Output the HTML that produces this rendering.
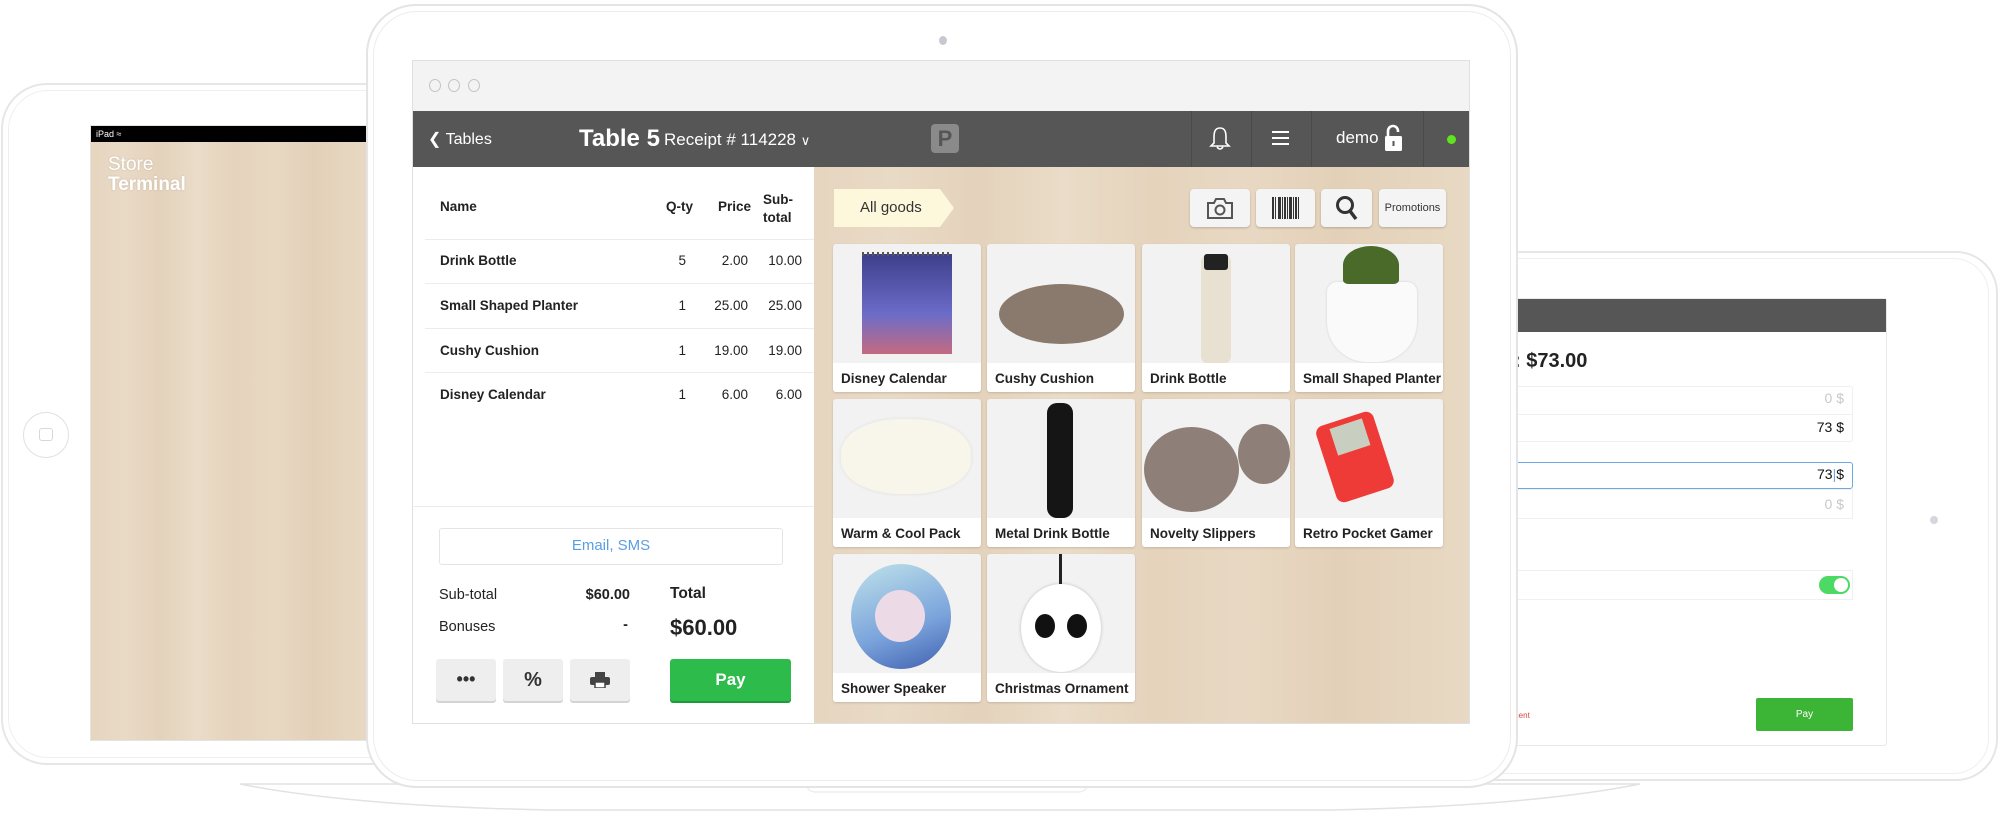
<!DOCTYPE html>
<html><head><meta charset="utf-8"><style>
*{box-sizing:border-box;margin:0;padding:0}
body{width:2000px;height:814px;background:#fff;position:relative;overflow:hidden;font-family:"Liberation Sans",sans-serif;color:#222}
.a{position:absolute}
.wood{background:linear-gradient(90deg,#e6d5bf 0%,#e9dac6 12%,#e4d2bb 25%,#eadcc8 38%,#e5d3bc 52%,#e8d8c3 66%,#e3d0b8 80%,#e8d9c4 100%)}
.card{position:absolute;width:148px;height:148px;background:#f2f2f2;border-radius:3px;box-shadow:0 1px 2px rgba(0,0,0,.15);overflow:hidden}
.card .lb{position:absolute;left:0;right:0;bottom:0;height:29px;background:#fff;font-size:13.5px;font-weight:bold;color:#222;padding:8px 0 0 8px;white-space:nowrap}
.tb{position:absolute;top:189px;height:38px;background:#f4f4f4;border-radius:4px;box-shadow:0 1px 2px rgba(0,0,0,.2)}
.row{position:absolute;left:440px;font-size:13.5px;font-weight:bold;color:#222}
.num{position:absolute;font-size:13.5px;text-align:right;color:#222}
.sep{position:absolute;left:425px;width:389px;height:1px;background:#ececec}
.gb{position:absolute;top:659px;height:42px;background:#eee;border-radius:3px;box-shadow:0 2px 0 #d4d4d4;text-align:center;font-weight:bold;color:#333}
</style></head><body>

<!-- LEFT IPAD -->
<div class="a" style="left:1px;top:83px;width:420px;height:682px;border:2px solid #e6e6e6;border-radius:46px"></div>
<div class="a" style="left:8px;top:90px;width:406px;height:668px;border:1px solid #efefef;border-radius:40px"></div>
<div class="a" style="left:23px;top:412px;width:46px;height:46px;border:1.5px solid #e2e2e2;border-radius:50%"></div>
<div class="a" style="left:39px;top:428px;width:14px;height:13px;border:1.5px solid #d8d8d8;border-radius:3px"></div>
<div class="a" style="left:90px;top:125px;width:280px;height:616px;border:1px solid #e4e4e4"></div>
<div class="a wood" style="left:91px;top:126px;width:278px;height:614px"></div>
<div class="a" style="left:91px;top:126px;width:278px;height:16px;background:#000;color:#fff;font-size:9px;padding:3px 0 0 5px">iPad <span style="font-size:9px">&#8776;</span></div>
<div class="a" style="left:108px;top:155px;color:#fff;font-size:19px;line-height:20px;text-shadow:0 0 2px rgba(0,0,0,.15)">Store<br><b>Terminal</b></div>

<!-- RIGHT IPAD -->
<div class="a" style="left:1380px;top:251px;width:618px;height:530px;border:2px solid #e6e6e6;border-radius:42px"></div>
<div class="a" style="left:1386px;top:258px;width:603px;height:516px;border:1px solid #efefef;border-radius:36px"></div>
<div class="a" style="left:1930px;top:516px;width:8px;height:8px;border-radius:50%;background:#d6d6dc"></div>
<div class="a" style="left:1440px;top:298px;width:447px;height:448px;border:1px solid #e8e8e8;border-radius:3px;background:#fff"></div>
<div class="a" style="left:1440px;top:299px;width:446px;height:33px;background:#565656"></div>
<div class="a" style="left:1514px;top:350px;font-size:20px;font-weight:bold;color:#222">: $73.00</div>
<div class="a" style="left:1440px;top:386px;width:413px;height:56px;border:1px solid #f0f0f0;border-radius:3px"></div>
<div class="a" style="left:1440px;top:414px;width:413px;height:1px;background:#f0f0f0"></div>
<div class="a" style="left:1780px;top:390px;width:64px;text-align:right;font-size:14px;color:#c8c8c8">0 $</div>
<div class="a" style="left:1780px;top:419px;width:64px;text-align:right;font-size:14px;color:#111">73 $</div>
<div class="a" style="left:1440px;top:462px;width:413px;height:27px;border:1.5px solid #6aa8e8;border-radius:3px"></div>
<div class="a" style="left:1780px;top:466px;width:64px;text-align:right;font-size:14px;color:#111">73<span style="color:#6aa8e8">|</span>$</div>
<div class="a" style="left:1440px;top:489px;width:413px;height:30px;border:1px solid #f0f0f0"></div>
<div class="a" style="left:1780px;top:496px;width:64px;text-align:right;font-size:14px;color:#c8c8c8">0 $</div>
<div class="a" style="left:1440px;top:570px;width:413px;height:30px;border:1px solid #f0f0f0"></div>
<div class="a" style="left:1819px;top:576px;width:31px;height:18px;border-radius:9px;background:#4cd964"></div>
<div class="a" style="left:1834px;top:578px;width:14px;height:14px;border-radius:50%;background:#fff"></div>
<div class="a" style="left:1512px;top:711px;font-size:8px;color:#e0453a">ment</div>
<div class="a" style="left:1756px;top:698px;width:97px;height:33px;background:#3cb536;border-radius:2px;color:#fff;font-size:10px;text-align:center;line-height:33px">Pay</div>

<!-- LAPTOP BASE -->
<svg class="a" style="left:230px;top:780px" width="1420" height="34"><path d="M10 4 H1410 Q1300 26 1100 30 H320 Q120 26 10 4Z" fill="#fff" stroke="#e2e2e2" stroke-width="1.5"/><path d="M576 5 H858 Q856 11 850 12 H584 Q578 11 576 5Z" fill="#fff" stroke="#e6e6e6"/></svg>
<!-- LAPTOP LID -->
<div class="a" style="left:366px;top:4px;width:1152px;height:784px;border:2px solid #e4e4e4;border-radius:50px;background:#fff"></div>
<div class="a" style="left:373px;top:11px;width:1138px;height:770px;border:1px solid #ececec;border-radius:44px"></div>
<div class="a" style="left:939px;top:36px;width:8px;height:9px;border-radius:50%;background:#c8c8d0"></div>

<!-- SCREEN -->
<div class="a" style="left:412px;top:60px;width:1058px;height:664px;border:1px solid #e0e0e0"></div>
<div class="a" style="left:413px;top:61px;width:1056px;height:50px;background:#f3f3f3"></div>
<div class="a" style="left:429px;top:79px;width:12px;height:13px;border:1.5px solid #c4c4c4;border-radius:50%"></div>
<div class="a" style="left:448px;top:79px;width:12px;height:13px;border:1.5px solid #c4c4c4;border-radius:50%"></div>
<div class="a" style="left:468px;top:79px;width:12px;height:13px;border:1.5px solid #c4c4c4;border-radius:50%"></div>
<div class="a" style="left:413px;top:111px;width:1056px;height:56px;background:#565656"></div>
<div class="a" style="left:428px;top:129px;color:#fff;font-size:16px">&#10094; Tables</div>
<div class="a" style="left:579px;top:125px;color:#fff;font-size:24px;font-weight:bold">Table 5</div>
<div class="a" style="left:664px;top:130px;color:#fff;font-size:17px">Receipt # 114228 <span style="font-size:13px">&#8744;</span></div>
<div class="a" style="left:931px;top:124px;width:28px;height:29px;border-radius:4px;background:#8a8a8a;color:#565656;font-weight:bold;font-size:22px;text-align:center;line-height:29px">P</div>
<div class="a" style="left:1191px;top:111px;width:1px;height:56px;background:#4a4a4a"></div>
<div class="a" style="left:1251px;top:111px;width:1px;height:56px;background:#4a4a4a"></div>
<div class="a" style="left:1311px;top:111px;width:1px;height:56px;background:#4a4a4a"></div>
<div class="a" style="left:1423px;top:111px;width:1px;height:56px;background:#4a4a4a"></div>
<svg class="a" style="left:1209px;top:126px" width="22" height="26"><path d="M11 2 C5 2 5 8 5 12 L5 17 L2 20 H20 L17 17 V12 C17 8 17 2 11 2Z M8 21 Q11 25 14 21" fill="none" stroke="#fff" stroke-width="1.6"/></svg>
<div class="a" style="left:1272px;top:131px;width:17px;height:2px;background:#fff;box-shadow:0 6px 0 #fff,0 12px 0 #fff"></div>
<div class="a" style="left:1336px;top:128px;color:#fff;font-size:17px">demo</div>
<svg class="a" style="left:1384px;top:124px" width="20" height="28"><path d="M4 12 V7 A5 5 0 0 1 14 7 V8" fill="none" stroke="#fff" stroke-width="2.6"/><rect x="1" y="12" width="17" height="15" rx="1.5" fill="#fff"/><rect x="8.5" y="17" width="2" height="5" fill="#565656"/></svg>
<div class="a" style="left:1447px;top:135px;width:9px;height:9px;border-radius:50%;background:#5fe51c"></div>

<!-- LEFT PANEL -->
<div class="a" style="left:413px;top:167px;width:401px;height:556px;background:#fff"></div>
<div class="row" style="top:199px">Name</div>
<div class="row" style="left:666px;top:199px">Q-ty</div>
<div class="row" style="left:718px;top:199px">Price</div>
<div class="row" style="left:763px;top:191px;line-height:18px">Sub-<br>total</div>
<div class="sep" style="top:239px"></div>
<div class="row" style="top:253px">Drink Bottle</div>
<div class="row" style="top:298px">Small Shaped Planter</div>
<div class="row" style="top:343px">Cushy Cushion</div>
<div class="row" style="top:387px">Disney Calendar</div>
<div class="sep" style="top:283px"></div><div class="sep" style="top:328px"></div><div class="sep" style="top:372px"></div>
<div class="num" style="left:660px;width:26px;top:253px">5</div>
<div class="num" style="left:700px;width:48px;top:253px">2.00</div>
<div class="num" style="left:752px;width:50px;top:253px">10.00</div>
<div class="num" style="left:660px;width:26px;top:298px">1</div>
<div class="num" style="left:700px;width:48px;top:298px">25.00</div>
<div class="num" style="left:752px;width:50px;top:298px">25.00</div>
<div class="num" style="left:660px;width:26px;top:343px">1</div>
<div class="num" style="left:700px;width:48px;top:343px">19.00</div>
<div class="num" style="left:752px;width:50px;top:343px">19.00</div>
<div class="num" style="left:660px;width:26px;top:387px">1</div>
<div class="num" style="left:700px;width:48px;top:387px">6.00</div>
<div class="num" style="left:752px;width:50px;top:387px">6.00</div>
<div class="a" style="left:413px;top:506px;width:401px;height:1px;background:#ececec"></div>
<div class="a" style="left:439px;top:528px;width:344px;height:37px;border:1.5px solid #e4e4e4;border-radius:3px;color:#5b9ee0;font-size:15px;text-align:center;line-height:34px">Email, SMS</div>
<div class="a" style="left:439px;top:587px;font-size:14.5px">Sub-total</div>
<div class="a" style="left:439px;top:619px;font-size:14.5px">Bonuses</div>
<div class="a" style="left:560px;top:587px;width:70px;text-align:right;font-size:14.5px;font-weight:bold">$60.00</div>
<div class="a" style="left:560px;top:617px;width:68px;text-align:right;font-size:14.5px;font-weight:bold">-</div>
<div class="a" style="left:670px;top:585px;font-size:15.5px;font-weight:bold">Total</div>
<div class="a" style="left:670px;top:615px;font-size:22px;font-weight:bold">$60.00</div>
<div class="gb" style="left:436px;width:60px;line-height:40px;font-size:18px">&bull;&bull;&bull;</div>
<div class="gb" style="left:503px;width:60px;line-height:42px;font-size:20px">%</div>
<div class="gb" style="left:570px;width:60px"><svg style="margin-top:13px" width="20" height="16"><rect x="5" y="0" width="10" height="5" fill="#444"/><rect x="0" y="5" width="20" height="8" rx="2" fill="#444"/><rect x="5" y="10" width="10" height="6" fill="#fff" stroke="#444" stroke-width="1.5"/></svg></div>
<div class="a" style="left:670px;top:659px;width:121px;height:42px;background:#2dbb4c;border-radius:3px;box-shadow:0 2px 0 #209a3a;color:#fff;font-size:17px;font-weight:bold;text-align:center;line-height:42px">Pay</div>

<!-- WOOD AREA -->
<div class="a wood" style="left:814px;top:167px;width:655px;height:556px"></div>
<svg class="a" style="left:834px;top:189px" width="124" height="38"><path d="M0 0 H106 L120 19 L106 38 H0Z" fill="#fdf7dc"/></svg>
<div class="a" style="left:860px;top:199px;font-size:15px;color:#333">All goods</div>
<div class="tb" style="left:1190px;width:60px"><svg style="margin:8px 0 0 16px" width="28" height="22"><path d="M2 6 H8 L10 2 H18 L20 6 H26 V21 H2Z" fill="none" stroke="#555" stroke-width="2"/><circle cx="14" cy="13" r="4.5" fill="none" stroke="#555" stroke-width="2"/></svg></div>
<div class="tb" style="left:1256px;width:59px"><svg style="margin:8px 0 0 16px" width="28" height="22"><g fill="#333"><rect x="0" width="2" height="22"/><rect x="3" width="1" height="22"/><rect x="6" width="3" height="22"/><rect x="10" width="1" height="22"/><rect x="12" width="2" height="22"/><rect x="15" width="1" height="22"/><rect x="17" width="3" height="22"/><rect x="21" width="1" height="22"/><rect x="23" width="2" height="22"/><rect x="26" width="1" height="22"/></g></svg></div>
<div class="tb" style="left:1321px;width:51px"><svg style="margin:6px 0 0 14px" width="24" height="26"><circle cx="10" cy="10" r="7.5" fill="none" stroke="#333" stroke-width="3"/><path d="M15 16 L21 24" stroke="#333" stroke-width="3.5"/></svg></div>
<div class="tb" style="left:1379px;width:67px;font-size:11px;color:#333;text-align:center;line-height:38px">Promotions</div>

<!-- CARDS -->
<div class="card" style="left:833px;top:244px"><div class="a" style="left:29px;top:10px;width:90px;height:100px;background:linear-gradient(#3d3f8a,#6c6cc9 60%,#c46a80)"></div><div class="a" style="left:29px;top:8px;width:90px;height:4px;background:repeating-linear-gradient(90deg,#555 0 2px,transparent 2px 5px)"></div><div class="lb">Disney Calendar</div></div>
<div class="card" style="left:987px;top:244px"><div class="a" style="left:12px;top:40px;width:125px;height:60px;border-radius:50%;background:#8a7a6e"></div><div class="lb">Cushy Cushion</div></div>
<div class="card" style="left:1142px;top:244px"><div class="a" style="left:59px;top:10px;width:30px;height:110px;border-radius:8px;background:#e8e0d0"></div><div class="a" style="left:62px;top:10px;width:24px;height:16px;background:#222;border-radius:3px"></div><div class="lb">Drink Bottle</div></div>
<div class="card" style="left:1295px;top:244px"><div class="a" style="left:32px;top:38px;width:90px;height:80px;border-radius:10px 10px 40px 40px;background:#fafafa;box-shadow:0 0 2px #ccc"></div><div class="a" style="left:48px;top:2px;width:56px;height:38px;background:#4a6a2a;border-radius:50% 50% 10% 10%"></div><div class="lb">Small Shaped Planter</div></div>
<div class="card" style="left:833px;top:399px"><div class="a" style="left:8px;top:20px;width:130px;height:75px;border-radius:45%;background:#f8f5ea;box-shadow:0 0 3px #ddd"></div><div class="lb">Warm &amp; Cool Pack</div></div>
<div class="card" style="left:987px;top:399px"><div class="a" style="left:60px;top:4px;width:26px;height:115px;border-radius:10px;background:#151515"></div><div class="lb">Metal Drink Bottle</div></div>
<div class="card" style="left:1142px;top:399px"><div class="a" style="left:2px;top:28px;width:95px;height:85px;border-radius:50%;background:#8e8078"></div><div class="a" style="left:96px;top:25px;width:52px;height:60px;border-radius:50%;background:#8e8078"></div><div class="lb">Novelty Slippers</div></div>
<div class="card" style="left:1295px;top:399px"><div class="a" style="left:30px;top:18px;width:60px;height:80px;border-radius:8px;background:#ef3b37;transform:rotate(-18deg)"></div><div class="a" style="left:38px;top:24px;width:34px;height:28px;background:#c8cfc0;transform:rotate(-18deg)"></div><div class="lb">Retro Pocket Gamer</div></div>
<div class="card" style="left:833px;top:554px"><div class="a" style="left:18px;top:10px;width:100px;height:105px;border-radius:50%;background:linear-gradient(160deg,#bfe2ea,#7aa3db 60%,#3f5fb0)"></div><div class="a" style="left:42px;top:36px;width:50px;height:52px;border-radius:50%;background:#ecdbe6"></div><div class="lb">Shower Speaker</div></div>
<div class="card" style="left:987px;top:554px"><div class="a" style="left:34px;top:30px;width:80px;height:88px;border-radius:50%;background:#fff;box-shadow:0 0 3px #bbb"></div><div class="a" style="left:72px;top:0;width:3px;height:30px;background:#222"></div><div class="a" style="left:48px;top:60px;width:20px;height:24px;border-radius:50%;background:#111"></div><div class="a" style="left:80px;top:60px;width:20px;height:24px;border-radius:50%;background:#111"></div><div class="lb">Christmas Ornament</div></div>
</body></html>
